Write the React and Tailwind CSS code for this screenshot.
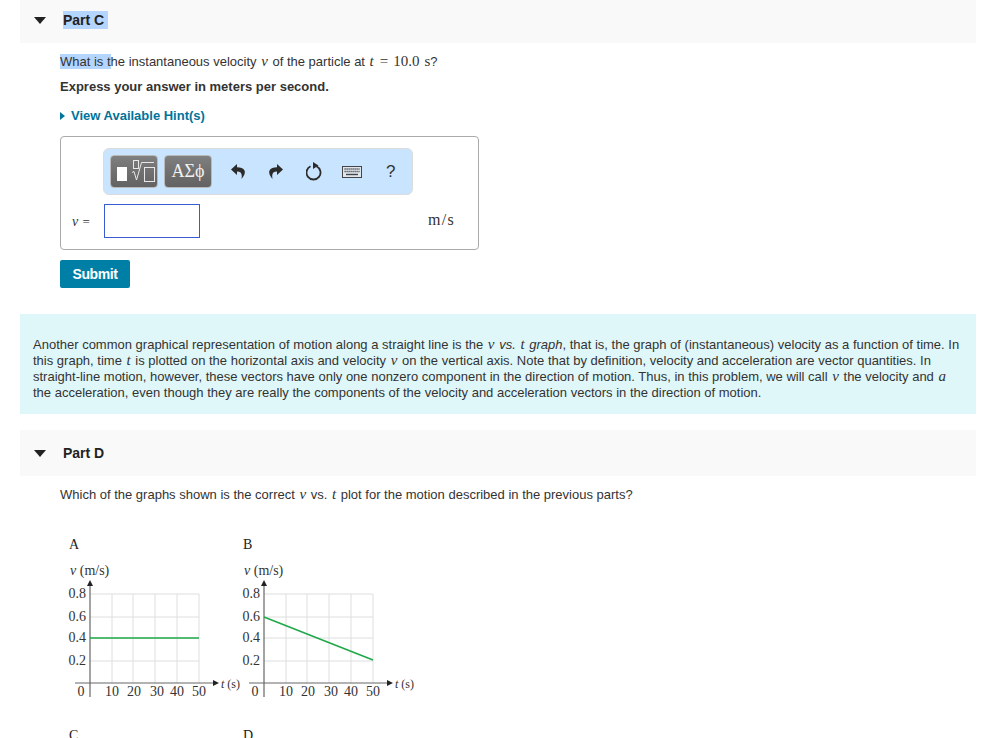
import React from 'react';

const SANS = { fontFamily: '"Liberation Sans", Arial, sans-serif' };
const SERIF = '"Liberation Serif", "Times New Roman", serif';

// Math bits set in a serif face, like the MathJax output
const V = () => <i className="font-['Liberation_Serif',serif] text-[15px] leading-none mx-[1px]">v</i>;
const T = () => <i className="font-['Liberation_Serif',serif] text-[15px] leading-none mx-[1px]">t</i>;

const PartHeader = ({ selected, children }) => (
    <div className="h-[46px] bg-[#f9f9f9] flex items-center">
        <svg className="ml-[14px] w-[12px] h-[7px] text-[#222]" viewBox="0 0 12 7">
            <path d="M0 0 H12 L6 7 Z" fill="currentColor" />
        </svg>
        <span className={`ml-[17px] pr-1 text-[14px] leading-[18px] font-bold text-[#222] ${selected ? 'bg-[#b4d5fe]' : ''}`}>
            {children}
        </span>
    </div>
);

const MatrixIcon = () => (
    <svg width="46" height="31" viewBox="1 1 46 31" fill="none">
        <rect x="7" y="12" width="10" height="14" fill="#fff" />
        <rect x="23.5" y="5.5" width="5" height="8" stroke="#e8e8e8" />
        <path d="M22 17.5 L24 16.5 L26.5 25 L31.5 7.5 H44" stroke="#e8e8e8" />
        <rect x="34.5" y="12.5" width="10" height="14" stroke="#e8e8e8" />
    </svg>
);

const ReplyIcon = ({ flip }) => (
    <svg width="14" height="15" viewBox="0 0 14 15" className={flip ? '-scale-x-100' : ''}>
        <path d="M6 0 L0 5.5 L6 11 V7.5 C10 7.5 11.5 9.5 10.5 15 C13 12 14.5 9 13.5 6.5 C12.5 4 9.5 3.2 6 3.2 Z" fill="#2b2b2b" />
    </svg>
);

const RedoCircle = () => (
    <svg width="16" height="19" viewBox="0 0 16 19" fill="none">
        <path d="M10.5 4.2 A7 7 0 1 1 4.5 4.2" stroke="#2b2b2b" strokeWidth="1.8" />
        <path d="M7 0 L12.5 3.6 L7 7 Z" fill="#2b2b2b" />
    </svg>
);

const KeyboardIcon = () => (
    <svg width="20" height="12" viewBox="0 0 20 12" fill="none">
        <rect x="0.5" y="0.5" width="19" height="11" fill="#dfe6ee" stroke="#444" />
        <path d="M2.5 3 H17.5 M2.5 5.5 H17.5" stroke="#444" strokeWidth="1.3" strokeDasharray="1.2 0.8" />
        <path d="M4 8.5 H16" stroke="#444" strokeWidth="1.4" />
    </svg>
);

const ToolButton = ({ children }) => (
    <div className="w-[48px] h-[33px] rounded-[4px] border border-[#b9b9b9] bg-gradient-to-b from-[#7f7f7f] to-[#626262] flex items-center justify-center">
        {children}
    </div>
);

const XLABELS = [[10, 52], [20, 74], [30, 97], [40, 117], [50, 139]];
const YLABELS = [['0.8', 64], ['0.6', 87], ['0.4', 108], ['0.2', 131]];
const GRID_X = [52, 73, 95, 117, 139];
const GRID_Y = [64, 87, 108, 131];

// One of the v-t plots; coordinates are relative to the image's top-left corner
const Graph = ({ letter, line }) => (
    <svg width="174" height="190" viewBox="0 0 174 190" className="shrink-0 overflow-visible" style={{ fontFamily: SERIF }}>
        <text x="9" y="19" fontSize="14" fill="#222">{letter}</text>
        <text x="10" y="45" fontSize="14" fill="#333"><tspan fontStyle="italic">v</tspan> (m/s)</text>
        {GRID_X.map((x) => (
            <line key={x} x1={x} x2={x} y1="64" y2="153" stroke="#dedede" />
        ))}
        {GRID_Y.map((y) => (
            <line key={y} x1="30" x2="139" y1={y} y2={y} stroke="#dedede" />
        ))}
        <line x1="15" x2="154" y1="153" y2="153" stroke="#666" />
        <line x1="30" x2="30" y1="56" y2="167" stroke="#666" strokeWidth="1.2" />
        <path d="M30 50 l-3 6 h6 z" fill="#222" />
        <path d="M159 153 l-6 -3 v6 z" fill="#222" />
        <line x1={line[0]} y1={line[1]} x2={line[2]} y2={line[3]} stroke="#1fa84a" strokeWidth="1.6" />
        {YLABELS.map(([label, y]) => (
            <text key={label} x="26" y={y + 4} fontSize="14" textAnchor="end" fill="#333">{label}</text>
        ))}
        <text x="21" y="166" fontSize="14" textAnchor="middle" fill="#333">0</text>
        {XLABELS.map(([n, x]) => (
            <text key={n} x={x} y="166" fontSize="14" textAnchor="middle" fill="#333">{n}</text>
        ))}
        <text x="161" y="158" fontSize="12" fill="#333"><tspan fontStyle="italic">t</tspan> (s)</text>
    </svg>
);

export default function App() {
    return (
        <div className="w-[994px] h-[738px] overflow-hidden bg-white pl-5 pr-[18px] text-[13px] text-[#333]" style={SANS}>
            <div className="-mt-[3px]">
                <PartHeader selected>Part C</PartHeader>
            </div>

            <div className="pl-10">
                <p className="mt-[11px] h-4 leading-4">
                    <span className="bg-[#b4d5fe]">What is t</span>he instantaneous velocity <V /> of the particle at <T />
                    <span className="font-['Liberation_Serif',serif] text-[15px] leading-none ml-[5px]">=</span>
                    <span className="font-['Liberation_Serif',serif] text-[15px] leading-none ml-[5px]">10.0</span>
                    <span className="font-['Liberation_Serif',serif] text-[15px] leading-none ml-[5px]">s</span>?
                </p>
                <p className="mt-[9px] leading-4 font-bold">Express your answer in meters per second.</p>
                <p className="mt-[13px] leading-4 font-bold text-[#00739a] flex items-center">
                    <svg width="5" height="8" viewBox="0 0 5 8" className="mr-[6px]">
                        <path d="M0 0 L5 4 L0 8 Z" fill="#00739a" />
                    </svg>
                    View Available Hint(s)
                </p>

                <div className="mt-[12px] w-[419px] h-[114px] rounded-[4px] border border-[#aaa] flex flex-col">
                    <div className="ml-[42px] mt-[11px] w-[310px] h-[47px] rounded-[6px] border border-[#dcdcdc] bg-[#c9e4ff] flex items-center pl-[6px] shrink-0">
                        <ToolButton><MatrixIcon /></ToolButton>
                        <div className="ml-[6px]">
                            <ToolButton>
                                <span className="text-[#f2f2f2] text-[18px]" style={{ fontFamily: SERIF }}>ΑΣϕ</span>
                            </ToolButton>
                        </div>
                        <div className="ml-[19px]"><ReplyIcon /></div>
                        <div className="ml-[24px]"><ReplyIcon flip /></div>
                        <div className="ml-[23px]"><RedoCircle /></div>
                        <div className="ml-[20px]"><KeyboardIcon /></div>
                        <span className="ml-[24px] text-[17px] text-[#333]">?</span>
                    </div>
                    <div className="mt-[9px] flex items-center">
                        <span className="w-[43px] pl-[11px] text-[13px] tracking-[0.5px]" style={{ fontFamily: SERIF }}><i className="text-[14px]">v</i> =</span>
                        <div className="w-[96px] h-[34px] border border-[#3b5bd0]"></div>
                        <span className="ml-auto mr-[23px] pb-[3px] text-[16px] tracking-[1.3px] text-[#333]" style={{ fontFamily: SERIF }}>m/s</span>
                    </div>
                </div>

                <button className="mt-[10px] block w-[70px] h-[28px] rounded-[2px] bg-[#007fa6] text-white text-[14px] font-bold tracking-[-0.4px]">Submit</button>
            </div>

            <div className="mt-[26px] h-[100px] bg-[#e0f7f9] pl-[13px] pr-[15px] pt-[23px] leading-4 text-[#333]">
                Another common graphical representation of motion along a straight line is the <V /> <em>vs.</em> <T /> <em>graph</em>, that is, the graph of (instantaneous) velocity as a function of time. In this graph, time <T /> is plotted on the horizontal axis and velocity <V /> on the vertical axis. Note that by definition, velocity and acceleration are vector quantities. In straight-line motion, however, these vectors have only one nonzero component in the direction of motion. Thus, in this problem, we will call <V /> the velocity and <i className="font-['Liberation_Serif',serif] text-[15px] leading-none mx-[1px]">a</i> the acceleration, even though they are really the components of the velocity and acceleration vectors in the direction of motion.
            </div>

            <div className="mt-4">
                <PartHeader>Part D</PartHeader>
            </div>

            <div className="pl-10">
                <p className="mt-[11px] h-4 leading-4">Which of the graphs shown is the correct <V /> vs. <T /> plot for the motion described in the previous parts?</p>
                <div className="mt-[27px] flex">
                    <Graph letter="A" line={[30, 108, 139, 108]} />
                    <Graph letter="B" line={[30, 87, 139, 130]} />
                </div>
                <div className="flex mt-[5px] text-[14px] text-[#222]" style={{ fontFamily: SERIF }}>
                    <span className="w-[174px] pl-[9px]">C</span>
                    <span className="pl-[9px]">D</span>
                </div>
            </div>
        </div>
    );
}
